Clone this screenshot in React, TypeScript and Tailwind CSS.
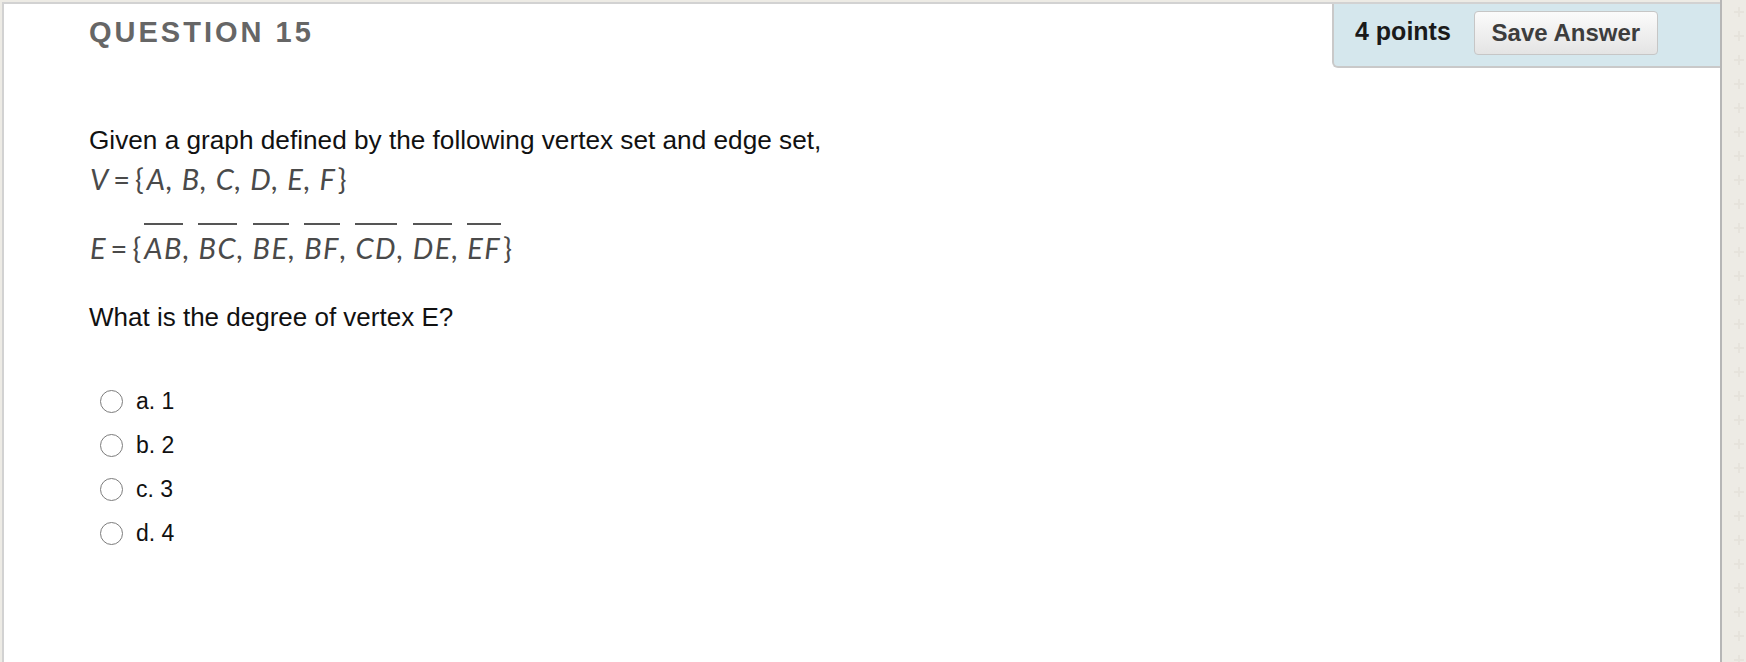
import React from "react";

const sans = { fontFamily: '"Liberation Sans", Arial, Helvetica, sans-serif' };
const math = { fontFamily: 'Lato, "Open Sans", sans-serif' };

const vertices = ["A", "B", "C", "D", "E", "F"];
const edges = ["AB", "BC", "BE", "BF", "CD", "DE", "EF"];
const options = ["a. 1", "b. 2", "c. 3", "d. 4"];

function Edge({ label }: { label: string }) {
  return (
    <span className="inline-block border-t-2 border-[#555] pt-[8px] leading-[29px] tracking-[1.5px]">
      {label}
    </span>
  );
}

function Comma() {
  return <span className="mr-[9px]">,</span>;
}

export default function App() {
  return (
    <div className="flex h-[662px] w-[1746px] overflow-hidden bg-[#edebe5]" style={sans}>
      <div className="ml-[2px] mt-[2px] flex w-[1718px] flex-col border-l-2 border-t-2 border-[#d2d2d2] bg-white">
        <div className="flex items-start justify-between">
          <h2 className="pl-[85px] pt-[14px] text-[29px] font-bold leading-none tracking-[3px] text-[#666]">
            QUESTION 15
          </h2>
          <div className="flex h-[64px] w-[388px] items-start rounded-bl-[6px] border-b-2 border-l-2 border-[#c9c9c9] bg-[#d5e7ed] pl-[21px] pt-[7px]">
            <span className="text-[25px] font-bold leading-[41px] text-[#1a1a1a]">4 points</span>
            <button
              type="button"
              className="ml-[23px] h-[44px] w-[184px] rounded-[4px] border border-[#c6c6c6] bg-gradient-to-b from-[#fbfbfb] to-[#e4e4e4] text-[24px] font-bold text-[#3d3d3d]"
            >
              Save Answer
            </button>
          </div>
        </div>

        <div className="flex flex-col pl-[85px] text-[26px] text-[#111]">
          <p className="mt-[57px] text-[26.2px] leading-[30px]">
            Given a graph defined by the following vertex set and edge set,
          </p>
          <p className="ml-[1px] mt-[9px] text-[29px] italic leading-[30px] text-[#4a4a4a]" style={math}>
            V<span className="mx-[5px] not-italic">=</span>
            <span className="mr-[3px] not-italic">{"{"}</span>
            {vertices.map((v, i) => (
              <React.Fragment key={v}>
                <span className="tracking-[1px]">{v}</span>
                {i < vertices.length - 1 && <Comma />}
              </React.Fragment>
            ))}
            <span className="ml-[2px] not-italic">{"}"}</span>
          </p>
          <p className="ml-[1px] mt-[29px] text-[29px] italic leading-[30px] text-[#4a4a4a]" style={math}>
            E<span className="mx-[5px] not-italic">=</span>
            <span className="mr-[3px] not-italic">{"{"}</span>
            {edges.map((e, i) => (
              <React.Fragment key={e}>
                <Edge label={e} />
                {i < edges.length - 1 && <Comma />}
              </React.Fragment>
            ))}
            <span className="ml-[2px] not-italic">{"}"}</span>
          </p>
          <p className="mt-[39px] leading-[30px]">What is the degree of vertex E?</p>

          <div className="mt-[47px] flex flex-col">
            {options.map((o) => (
              <label key={o} className="flex h-[44px] items-center">
                <span className="ml-[11px] h-[23px] w-[23px] rounded-full border-[1.5px] border-[#7c7c7c] bg-white" />
                <span className="ml-[13px] text-[23px] text-[#111]">{o}</span>
              </label>
            ))}
          </div>
        </div>
      </div>
      <div className="w-[2px] bg-[#b6b6b6]" />
      <div className="flex-1">
        <svg width="24" height="662" className="block">
          <defs>
            <pattern id="tx" width="24" height="24" patternUnits="userSpaceOnUse">
              <path d="M12 12h10M17 7v10" stroke="#e6e3dc" strokeWidth="2" />
            </pattern>
          </defs>
          <rect width="24" height="662" fill="url(#tx)" />
        </svg>
      </div>
    </div>
  );
}
